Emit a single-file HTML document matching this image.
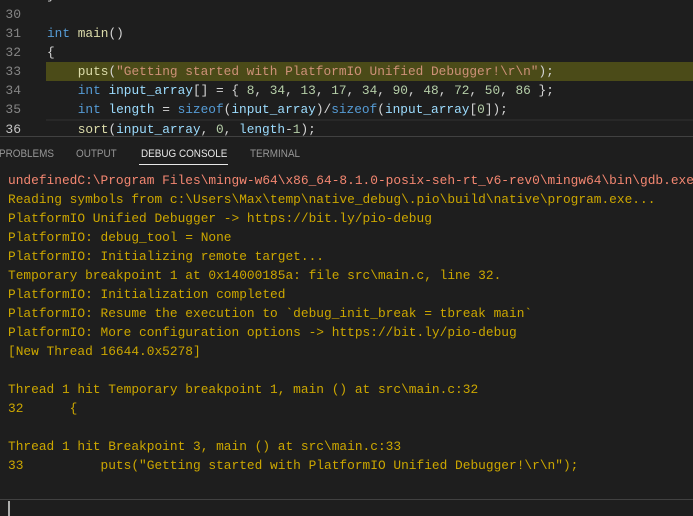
<!DOCTYPE html>
<html><head><meta charset="utf-8"><style>
*{margin:0;padding:0;box-sizing:border-box}
body{width:693px;height:516px;background:#1e1e1e;overflow:hidden;position:relative;font-family:"Liberation Mono",monospace;font-size:12.8px}
.ln{position:absolute;left:0;width:21px;text-align:right;color:#858585;height:19px;line-height:19px;font-size:13px}
.ln.cur{color:#c6c6c6}
.code{position:absolute;left:47px;height:19px;line-height:19px;color:#d4d4d4;white-space:pre}
.k{color:#569cd6}.f{color:#dcdcaa}.s{color:#ce9178}.n{color:#b5cea8}.v{color:#9cdcfe}
.hl{position:absolute;left:46px;right:0;top:62px;height:19px;background:#4b4b18}
.curline{position:absolute;left:46px;right:0;top:119px;height:19px;border-top:2px solid #282828}
.tabs{position:absolute;top:136px;left:0;right:0;height:30px;border-top:1px solid #414141;font-family:"Liberation Sans",sans-serif;font-size:11px;color:#969696}
.tabs span{position:absolute;top:11px;transform-origin:0 50%;transform:scaleX(0.9)}
.con{position:absolute;left:8px;top:171px;white-space:pre;color:#cca700;line-height:19px;font-size:12.85px}
.r{color:#f48771}
</style></head><body>
<div class="code" style="top:-14px;left:47px">}</div>
<div class="ln" style="top:5px">30</div>
<div class="ln" style="top:24px">31</div><div class="code" style="top:24px"><span class="k">int</span> <span class="f">main</span>()</div>
<div class="ln" style="top:43px">32</div><div class="code" style="top:43px">{</div>
<div class="hl"></div>
<div class="ln" style="top:62px">33</div><div class="code" style="top:62px">    <span class="f">puts</span>(<span class="s">"Getting started with PlatformIO Unified Debugger!\r\n"</span>);</div>
<div class="ln" style="top:81px">34</div><div class="code" style="top:81px">    <span class="k">int</span> <span class="v">input_array</span>[] = { <span class="n">8</span>, <span class="n">34</span>, <span class="n">13</span>, <span class="n">17</span>, <span class="n">34</span>, <span class="n">90</span>, <span class="n">48</span>, <span class="n">72</span>, <span class="n">50</span>, <span class="n">86</span> };</div>
<div class="ln" style="top:100px">35</div><div class="code" style="top:100px">    <span class="k">int</span> <span class="v">length</span> = <span class="k">sizeof</span>(<span class="v">input_array</span>)/<span class="k">sizeof</span>(<span class="v">input_array</span>[<span class="n">0</span>]);</div>
<div class="curline"></div>
<div class="ln cur" style="top:120px">36</div><div class="code" style="top:120px">    <span class="f">sort</span>(<span class="v">input_array</span>, <span class="n">0</span>, <span class="v">length</span>-<span class="n">1</span>);</div>
<div class="tabs">
<span style="left:-1px">PROBLEMS</span><span style="left:76px">OUTPUT</span><span style="left:141px;color:#e7e7e7">DEBUG CONSOLE</span><span style="left:250px">TERMINAL</span>
<div style="position:absolute;left:139px;top:27px;width:89px;height:1px;background:#e7e7e7"></div>
</div>
<div class="con"><span class="r">undefinedC:\Program Files\mingw-w64\x86_64-8.1.0-posix-seh-rt_v6-rev0\mingw64\bin\gdb.exe</span>
Reading symbols from c:\Users\Max\temp\native_debug\.pio\build\native\program.exe...
PlatformIO Unified Debugger -> https://bit.ly/pio-debug
PlatformIO: debug_tool = None
PlatformIO: Initializing remote target...
Temporary breakpoint 1 at 0x14000185a: file src\main.c, line 32.
PlatformIO: Initialization completed
PlatformIO: Resume the execution to `debug_init_break = tbreak main`
PlatformIO: More configuration options -> https://bit.ly/pio-debug
[New Thread 16644.0x5278]

Thread 1 hit Temporary breakpoint 1, main () at src\main.c:32
32      {

Thread 1 hit Breakpoint 3, main () at src\main.c:33
33          puts("Getting started with PlatformIO Unified Debugger!\r\n");</div>
<div style="position:absolute;left:0;right:0;top:499px;height:1px;background:#414141"></div>
<div style="position:absolute;left:8px;top:501px;width:2px;height:15px;background:#aeafad"></div>
</body></html>
